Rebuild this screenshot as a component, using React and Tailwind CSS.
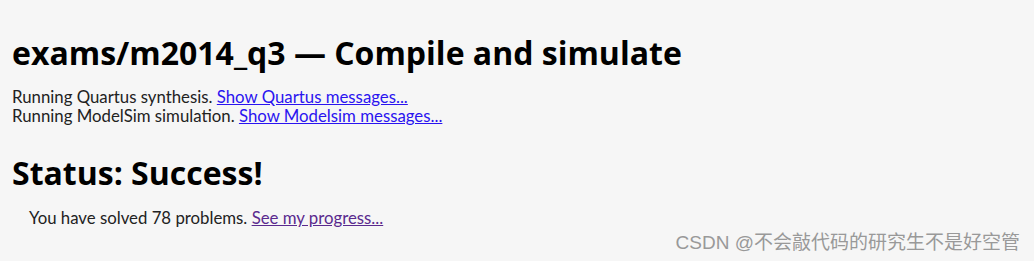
import React from 'react';

const App = () => {
  return (
    <div className="min-h-[261px] bg-[#f6f6f6] relative overflow-hidden">
      <div className="px-3 pt-[34px] font-['Lato',sans-serif] text-[16.8px] leading-[19px] text-[#222]">
        <h1 className="font-['Open_Sans',sans-serif] font-bold text-[32px] leading-[38px] text-black mb-[15px]">
          exams/m2014_q3 — Compile and simulate
        </h1>
        <div>
          Running Quartus synthesis.{' '}
          <a href="#" className="text-[#2a14f0] underline">Show Quartus messages...</a>
        </div>
        <div>
          Running ModelSim simulation.{' '}
          <a href="#" className="text-[#2a14f0] underline">Show Modelsim messages...</a>
        </div>
        <h2 className="font-['Open_Sans',sans-serif] font-bold text-[32px] leading-[38px] text-black mt-[29px] mb-[16px]">
          Status: Success!
        </h2>
        <p className="pl-[17px]">
          You have solved 78 problems.{' '}
          <a href="#" className="text-[#5a2a8e] underline">See my progress...</a>
        </p>
      </div>
      <div className="absolute right-[14px] bottom-[4px] font-['Liberation_Sans','Noto_Sans_CJK_SC',sans-serif] text-[19px] text-[#999]">
        CSDN @不会敲代码的研究生不是好空管
      </div>
    </div>
  );
};

export default App;
